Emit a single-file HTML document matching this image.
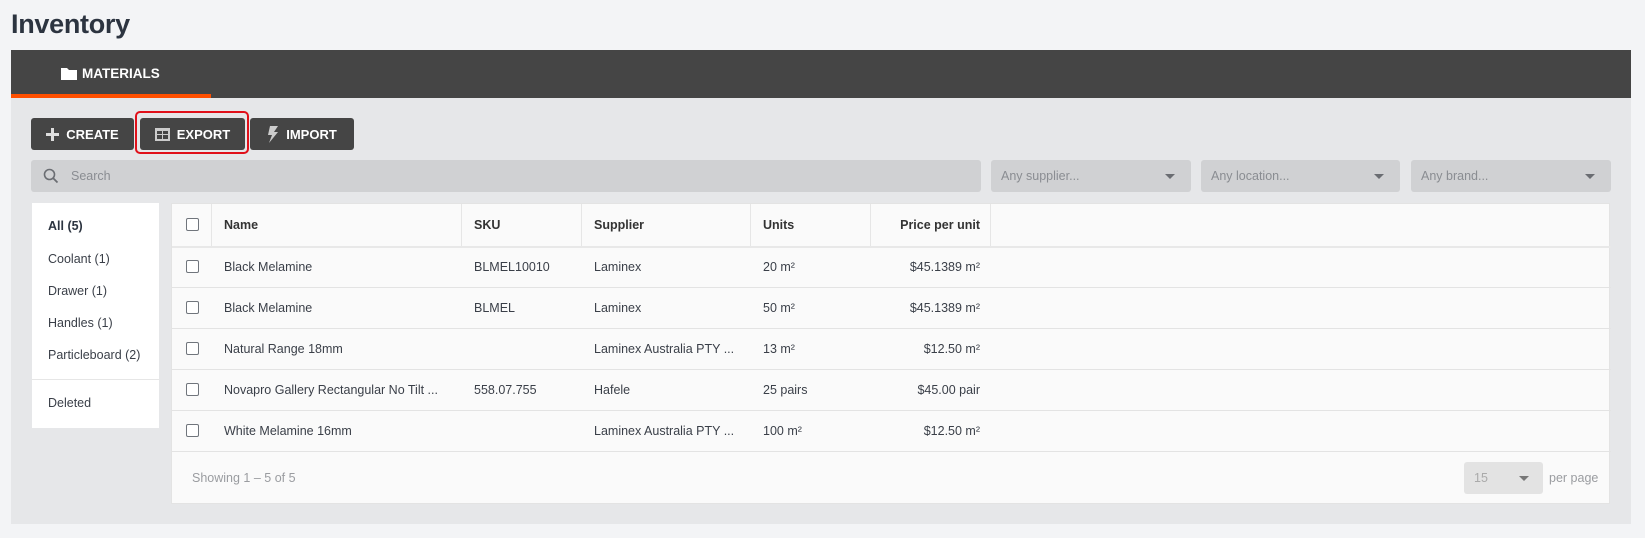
<!DOCTYPE html>
<html><head><meta charset="utf-8"><style>
*{box-sizing:border-box;margin:0;padding:0}
body{width:1645px;height:538px;background:#f3f4f6;font-family:"Liberation Sans",sans-serif;color:#3a3f48;position:relative;overflow:hidden;font-size:12.5px}
.abs{position:absolute}
h1{position:absolute;left:11px;top:9px;font-size:27px;font-weight:bold;color:#2c3440;letter-spacing:-0.3px}
.bar{left:11px;top:50px;width:1620px;height:48px;background:#454545}
.orange{left:11px;top:94px;width:200px;height:4px;background:#ff4f00}
.tab{left:61px;top:66px;color:#fff;font-weight:bold;font-size:13.5px;display:flex;align-items:center;gap:5px}
.panel{left:11px;top:98px;width:1620px;height:426px;background:#e6e7e9}
.btn{top:118px;height:32px;background:#454545;color:#fff;font-weight:bold;font-size:13px;border-radius:3px;display:flex;align-items:center;justify-content:center;gap:7px}
.red{left:135px;top:111px;width:114px;height:43px;border:2px solid #e0101a;border-radius:5px}
.inp{top:160px;height:32px;background:#d0d1d3;border-radius:3px;color:#8a8d92;font-size:12.5px;display:flex;align-items:center}
.caret{position:absolute;right:16px;top:14px;width:0;height:0;border-left:5px solid transparent;border-right:5px solid transparent;border-top:5px solid #6a6d72}
.side{left:32px;top:203px;width:127px;height:225px;background:#fff}
.side div{position:absolute;left:16px}
.tbl{left:171px;top:203px;width:1439px;height:301px;background:#fafafa;border:1px solid #e3e3e3}
.hl{position:absolute;left:0;width:1439px;height:1px;background:#e3e3e3}
.vl{position:absolute;top:0;width:1px;height:43px;background:#e6e6e6}
.cb{position:absolute;left:14px;width:13px;height:13px;border:1.5px solid #70757c;border-radius:2px;background:#fff}
.c{position:absolute;white-space:nowrap}
.h{font-weight:bold;color:#333}
.r{text-align:right;width:200px}
</style></head><body>
<h1>Inventory</h1>
<div class="abs panel"></div>
<div class="abs bar"></div>
<div class="abs orange"></div>
<div class="abs tab"><svg width="16" height="13" viewBox="0 0 16 13"><path d="M0 1h6l2 2h8v10H0z" fill="#fff"/></svg>MATERIALS</div>

<div class="abs btn" style="left:31px;width:103px"><svg width="13" height="13" viewBox="0 0 13 13"><path d="M5 0h3v5h5v3H8v5H5V8H0V5h5z" fill="#ddd"/></svg>CREATE</div>
<div class="abs btn" style="left:140px;width:105px"><svg width="15" height="13" viewBox="0 0 15 13"><rect x="0" y="0" width="15" height="13" fill="#ccc"/><rect x="2" y="3" width="5" height="3" fill="#454545"/><rect x="8" y="3" width="5" height="3" fill="#454545"/><rect x="2" y="7" width="5" height="4" fill="#454545"/><rect x="8" y="7" width="5" height="4" fill="#454545"/></svg>EXPORT</div>
<div class="abs red"></div>
<div class="abs btn" style="left:250px;width:104px"><svg width="12" height="17" viewBox="0 0 12 17"><path d="M3 0h8L7 6h4L2 17l3-8H1z" fill="#ccc"/></svg>IMPORT</div>

<div class="abs inp" style="left:31px;width:950px;padding-left:40px">Search
<svg class="abs" style="left:12px;top:8px" width="16" height="16" viewBox="0 0 16 16"><circle cx="6.5" cy="6.5" r="5" fill="none" stroke="#6a6d72" stroke-width="1.6"/><path d="M10 10l4.5 4.5" stroke="#6a6d72" stroke-width="1.8"/></svg></div>
<div class="abs inp" style="left:991px;width:200px;padding-left:10px">Any supplier...<span class="caret"></span></div>
<div class="abs inp" style="left:1201px;width:199px;padding-left:10px">Any location...<span class="caret"></span></div>
<div class="abs inp" style="left:1411px;width:200px;padding-left:10px">Any brand...<span class="caret"></span></div>

<div class="abs side">
<div style="top:16px;font-weight:bold;color:#2c3440">All (5)</div>
<div style="top:49px">Coolant (1)</div>
<div style="top:81px">Drawer (1)</div>
<div style="top:113px">Handles (1)</div>
<div style="top:145px">Particleboard (2)</div>
<div style="left:0;top:176px;width:127px;height:1px;background:#e6e6e6"></div>
<div style="top:193px">Deleted</div>
</div>

<div class="abs tbl">
<div class="vl" style="left:39px"></div><div class="vl" style="left:289px"></div><div class="vl" style="left:409px"></div><div class="vl" style="left:578px"></div><div class="vl" style="left:698px"></div><div class="vl" style="left:818px"></div>
<div class="hl" style="top:42px;height:2px;background:#e8e8e8"></div>
<div class="hl" style="top:83px"></div><div class="hl" style="top:124px"></div><div class="hl" style="top:165px"></div><div class="hl" style="top:206px"></div><div class="hl" style="top:247px"></div>
<div class="cb" style="top:14px"></div>
<div class="c h" style="left:52px;top:14px">Name</div>
<div class="c h" style="left:302px;top:14px">SKU</div>
<div class="c h" style="left:422px;top:14px">Supplier</div>
<div class="c h" style="left:591px;top:14px">Units</div>
<div class="c h r" style="left:608px;top:14px">Price per unit</div>

<div class="cb" style="top:56px"></div>
<div class="c" style="left:52px;top:56px">Black Melamine</div><div class="c" style="left:302px;top:56px">BLMEL10010</div><div class="c" style="left:422px;top:56px">Laminex</div><div class="c" style="left:591px;top:56px">20 m²</div><div class="c r" style="left:608px;top:56px">$45.1389 m²</div>
<div class="cb" style="top:97px"></div>
<div class="c" style="left:52px;top:97px">Black Melamine</div><div class="c" style="left:302px;top:97px">BLMEL</div><div class="c" style="left:422px;top:97px">Laminex</div><div class="c" style="left:591px;top:97px">50 m²</div><div class="c r" style="left:608px;top:97px">$45.1389 m²</div>
<div class="cb" style="top:138px"></div>
<div class="c" style="left:52px;top:138px">Natural Range 18mm</div><div class="c" style="left:422px;top:138px">Laminex Australia PTY ...</div><div class="c" style="left:591px;top:138px">13 m²</div><div class="c r" style="left:608px;top:138px">$12.50 m²</div>
<div class="cb" style="top:179px"></div>
<div class="c" style="left:52px;top:179px">Novapro Gallery Rectangular No Tilt ...</div><div class="c" style="left:302px;top:179px">558.07.755</div><div class="c" style="left:422px;top:179px">Hafele</div><div class="c" style="left:591px;top:179px">25 pairs</div><div class="c r" style="left:608px;top:179px">$45.00 pair</div>
<div class="cb" style="top:220px"></div>
<div class="c" style="left:52px;top:220px">White Melamine 16mm</div><div class="c" style="left:422px;top:220px">Laminex Australia PTY ...</div><div class="c" style="left:591px;top:220px">100 m²</div><div class="c r" style="left:608px;top:220px">$12.50 m²</div>

<div class="c" style="left:20px;top:267px;color:#9a9ca0">Showing 1 – 5 of 5</div>
<div class="abs" style="left:1292px;top:258px;width:79px;height:32px;background:#e3e3e3;border-radius:3px;color:#aaa;padding:9px 0 0 10px">15<span class="caret" style="right:14px;top:14px;border-top-color:#777"></span></div>
<div class="c" style="left:1377px;top:267px;color:#9a9ca0">per page</div>
</div>
</body></html>
